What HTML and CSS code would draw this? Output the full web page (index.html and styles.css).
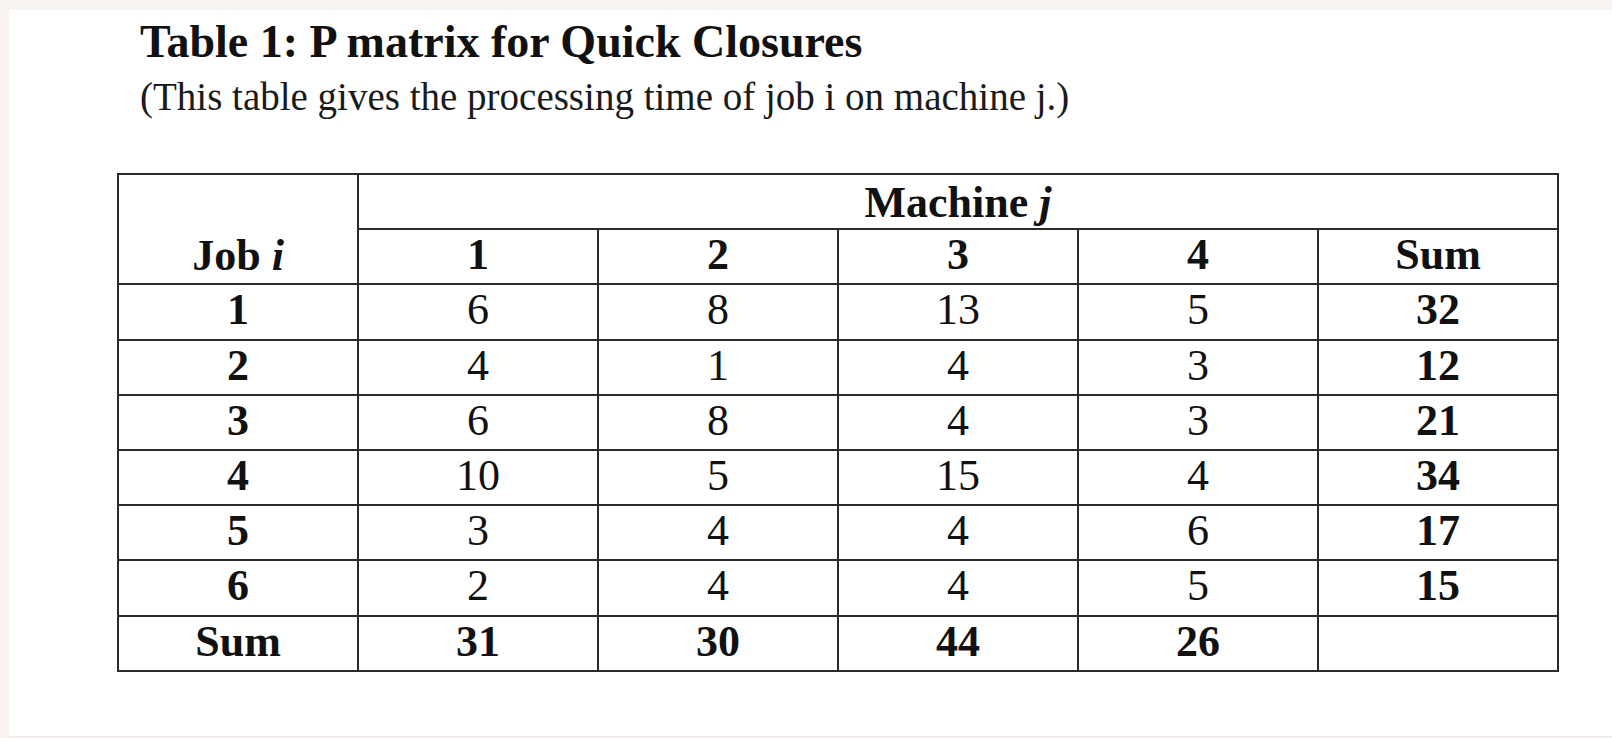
FILE: index.html
```html
<!DOCTYPE html>
<html lang="en">
<head>
<meta charset="utf-8">
<title>Table 1: P matrix for Quick Closures</title>
<link rel="stylesheet" href="styles.css">
</head>
<body>
<div class="page">
  <h1 class="title">Table 1: P matrix for Quick Closures</h1>
  <p class="subtitle">(This table gives the processing time of job i on machine j.)</p>
  <table class="matrix">
    <tbody>
      <tr>
        <th class="job-head" rowspan="2">Job <i>i</i></th>
        <th class="machine-head" colspan="5">Machine <i>j</i></th>
      </tr>
      <tr>
        <th>1</th><th>2</th><th>3</th><th>4</th><th>Sum</th>
      </tr>
      <tr><th>1</th><td>6</td><td>8</td><td>13</td><td>5</td><th>32</th></tr>
      <tr><th>2</th><td>4</td><td>1</td><td>4</td><td>3</td><th>12</th></tr>
      <tr><th>3</th><td>6</td><td>8</td><td>4</td><td>3</td><th>21</th></tr>
      <tr><th>4</th><td>10</td><td>5</td><td>15</td><td>4</td><th>34</th></tr>
      <tr><th>5</th><td>3</td><td>4</td><td>4</td><td>6</td><th>17</th></tr>
      <tr><th>6</th><td>2</td><td>4</td><td>4</td><td>5</td><th>15</th></tr>
      <tr><th>Sum</th><th>31</th><th>30</th><th>44</th><th>26</th><th></th></tr>
    </tbody>
  </table>
</div>
</body>
</html>
```

FILE: styles.css
```css
html, body {
  margin: 0;
  padding: 0;
}

body {
  background: #f8f3f1;
  font-family: "Liberation Serif", "Times New Roman", serif;
  color: #111;
}

.page {
  margin: 10px 0 0 9px;
  height: 727px;
  background: #ffffff;
  border-bottom: 1px solid #efedec;
  box-sizing: border-box;
  padding: 6px 0 0 131px;
}

.title {
  margin: 0;
  font-size: 46px;
  line-height: 52px;
  font-weight: bold;
  color: #111;
}

.subtitle {
  margin: 0;
  padding-top: 4px;
  font-size: 39px;
  line-height: 50px;
  font-weight: normal;
  color: #1a1a1a;
}

.matrix {
  margin: 51px 0 0 -23px;
  border-collapse: collapse;
  table-layout: fixed;
  width: 1442px;
  font-size: 44px;
  color: #111;
}

.matrix th,
.matrix td {
  border: 2px solid #2b2b2b;
  height: 50.2px;
  padding: 0 0 3px;
  text-align: center;
  vertical-align: middle;
  line-height: 48px;
}

.matrix th {
  font-weight: bold;
}

.matrix td {
  font-weight: normal;
}

.matrix .machine-head {
  padding: 3px 0 0;
}

.matrix .job-head {
  vertical-align: bottom;
  padding-bottom: 3px;
}
```
